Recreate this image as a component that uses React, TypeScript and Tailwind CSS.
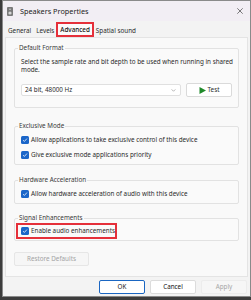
import React from "react";

function Check() {
  return (
    <span className="flex h-[8px] w-[8px] shrink-0 items-center justify-center rounded-[1.5px] bg-[#1b66c9]">
      <svg viewBox="0 0 8 8" className="h-[6px] w-[6px]">
        <path d="M1.4 4.2 L3.2 5.9 L6.6 2.1" fill="none" stroke="#fff" strokeWidth="1" />
      </svg>
    </span>
  );
}

function CheckRow({ label, className = "" }: { label: string; className?: string }) {
  return (
    <div className={`flex h-[8px] items-center gap-[2px] ${className}`}>
      <Check />
      <span className="whitespace-nowrap">{label}</span>
    </div>
  );
}

function Group({
  title,
  className = "",
  children,
}: {
  title: string;
  className?: string;
  children: React.ReactNode;
}) {
  return (
    <fieldset className={`rounded-[2px] border border-[#e2e2e2] bg-[#fafafa] px-[6px] ${className}`}>
      <legend className="ml-[-3px] px-[1px] leading-[8px] text-[#3a3a3a]">{title}</legend>
      {children}
    </fieldset>
  );
}

export default function App() {
  return (
    <div
      className="h-[300px] w-[251px] overflow-hidden bg-[#3c3c3c] text-[6.3px] text-[#2b2b2b]"
      style={{ fontFamily: '"Noto Sans", "Open Sans", sans-serif' }}
    >
      <div className="ml-[2px] flex h-[297px] w-[249px] flex-col border border-[#8a8a8a] bg-[#f3f3f3]">
        {/* title bar */}
        <div className="flex h-[20px] shrink-0 items-center bg-[#f2eef4] pl-[4px] pr-[7px]">
          <svg viewBox="0 0 6 9" className="h-[9px] w-[6px]">
            <rect x="0" y="0" width="6" height="9" rx="1" fill="#7a7a7a" />
            <circle cx="3" cy="6" r="1.6" fill="#d6d6d6" />
            <circle cx="3" cy="2.3" r="0.8" fill="#d6d6d6" />
          </svg>
          <span className="ml-[7px] text-[7.3px] text-[#222]">Speakers Properties</span>
          <svg viewBox="0 0 6 6" className="ml-auto h-[6px] w-[6px]">
            <path d="M0.3 0.3 L5.7 5.7 M5.7 0.3 L0.3 5.7" stroke="#444" strokeWidth="0.7" />
          </svg>
        </div>

        {/* tabs */}
        <div className="flex h-[16px] shrink-0 items-end pl-[2px] pt-[1px]">
          <div className="flex h-[13px] items-center px-[3px]">General</div>
          <div className="flex h-[13px] items-center px-[2px]">Levels</div>
          <div className="flex h-[15px] items-center border-2 border-[#e5303a] bg-[#fbfbfb] px-[2px] font-medium text-[#111]">
            Advanced
          </div>
          <div className="flex h-[13px] items-center px-[2px]">Spatial sound</div>
        </div>

        {/* tab panel */}
        <div className="mx-[2px] flex h-[240px] shrink-0 flex-col border border-[#e4e4e4] bg-[#f9f9f9] px-[8px] pt-[6px]">
          <Group title="Default Format" className="pb-[10px]">
            <p className="mr-[-6px] mt-[6px] leading-[8px]">
              Select the sample rate and bit depth to be used when running in shared mode.
            </p>
            <div className="mt-[9px] flex items-center justify-between">
              <div className="flex h-[12px] w-[160px] items-center justify-between rounded-[2px] border border-[#e0e0e0] bg-white pl-[3px] pr-[4px]">
                <span>24 bit, 48000 Hz</span>
                <svg viewBox="0 0 6 4" className="h-[3px] w-[5px]">
                  <path d="M0.5 0.5 L3 3 L5.5 0.5" fill="none" stroke="#888" strokeWidth="0.8" />
                </svg>
              </div>
              <div className="flex h-[14px] w-[46px] items-center justify-center gap-[2px] rounded-[2px] border border-[#dadada] bg-white">
                <svg viewBox="0 0 7 7" className="h-[7px] w-[7px]">
                  <path d="M0.5 0 L7 3.5 L0.5 7 Z" fill="#1f8a2a" />
                </svg>
                <span>Test</span>
              </div>
            </div>
          </Group>

          <Group title="Exclusive Mode" className="mt-[14px] pb-[5px]">
            <CheckRow label="Allow applications to take exclusive control of this device" className="mt-[6px]" />
            <CheckRow label="Give exclusive mode applications priority" className="mt-[7px]" />
          </Group>

          <Group title="Hardware Acceleration" className="mt-[11px] pb-[5px]">
            <CheckRow label="Allow hardware acceleration of audio with this device" className="mt-[6px]" />
          </Group>

          <Group title="Signal Enhancements" className="mt-[10px] pb-[1px]">
            <div className="ml-[-5px] mt-[1px] flex h-[16px] w-[101px] items-center border-2 border-[#e5303a] pl-[3px]">
              <CheckRow label="Enable audio enhancements" />
            </div>
          </Group>

          <div className="mt-[11px] flex h-[14px] w-[75px] items-center justify-center rounded-[2px] border border-[#e6e6e6] bg-[#f6f6f6] text-[#a3a3a3]">
            Restore Defaults
          </div>
        </div>

        {/* footer */}
        <div className="flex flex-1 items-center justify-end gap-[5px] pr-[3px]">
          <div className="flex h-[14px] w-[46px] items-center justify-center rounded-[2px] border border-[#1a66c2] bg-white text-[#111]">
            OK
          </div>
          <div className="flex h-[14px] w-[46px] items-center justify-center rounded-[2px] border border-[#dcdcdc] bg-white text-[#111]">
            Cancel
          </div>
          <div className="flex h-[14px] w-[46px] items-center justify-center rounded-[2px] border border-[#ececec] bg-[#f6f6f6] text-[#a6a6a6]">
            Apply
          </div>
        </div>
      </div>
    </div>
  );
}
